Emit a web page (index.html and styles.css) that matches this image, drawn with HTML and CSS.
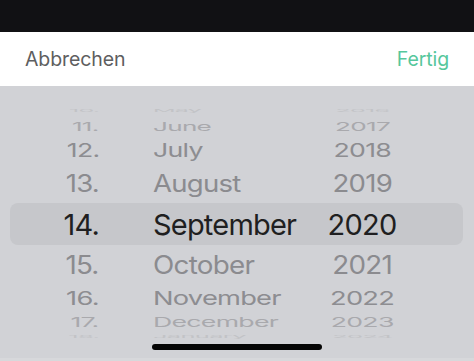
FILE: index.html
```html
<!DOCTYPE html>
<html lang="de">
<head>
<meta charset="utf-8">
<title>Datum wählen</title>
<link rel="stylesheet" href="styles.css">
</head>
<body>
<div class="status"></div>
<div class="toolbar">
  <span class="btn cancel">Abbrechen</span>
  <span class="btn done">Fertig</span>
</div>
<div class="picker">
  <div class="rows">
    <div class="row r-4"><span class="day"><i>10.</i></span><span class="month"><i>May</i></span><span class="year"><i>2016</i></span></div>
    <div class="row r-3"><span class="day"><i>11.</i></span><span class="month"><i>June</i></span><span class="year"><i>2017</i></span></div>
    <div class="row r-2"><span class="day"><i>12.</i></span><span class="month"><i>July</i></span><span class="year"><i>2018</i></span></div>
    <div class="row r-1"><span class="day"><i>13.</i></span><span class="month"><i>August</i></span><span class="year"><i>2019</i></span></div>
    <div class="row r0"><span class="day"><i>14.</i></span><span class="month"><i>September</i></span><span class="year"><i>2020</i></span></div>
    <div class="row r1"><span class="day"><i>15.</i></span><span class="month"><i>October</i></span><span class="year"><i>2021</i></span></div>
    <div class="row r2"><span class="day"><i>16.</i></span><span class="month"><i>November</i></span><span class="year"><i>2022</i></span></div>
    <div class="row r3"><span class="day"><i>17.</i></span><span class="month"><i>December</i></span><span class="year"><i>2023</i></span></div>
    <div class="row r4"><span class="day"><i>18.</i></span><span class="month"><i>January</i></span><span class="year"><i>2024</i></span></div>
  </div>
  <div class="home"></div>
  <div class="safe"></div>
</div>
</body>
</html>
```

FILE: styles.css
```css
html, body {
  margin: 0;
  padding: 0;
}
body {
  width: 474px;
  height: 361px;
  overflow: hidden;
  font-family: Inter, "Noto Sans", "Liberation Sans", sans-serif;
  background: #d1d2d6;
}
.status {
  height: 32px;
  background: #111114;
}
.toolbar {
  height: 54px;
  background: #ffffff;
  display: flex;
  align-items: center;
  justify-content: space-between;
  padding: 0 25px 0 25px;
  font-size: 19.5px;
  letter-spacing: -0.1px;
}
.cancel { color: #5e5e60; }
.done { color: #56c79c; }

.picker {
  height: 275px;
  display: flex;
  flex-direction: column;
  background: #d1d2d6;
}
.rows {
  padding: 18px 11px 0 10px;
  height: 237px;
}
.row {
  display: grid;
  grid-template-columns: 143px 150px 118px;
  grid-template-rows: minmax(0, 1fr);
  align-items: center;
  font-size: 29px;
  letter-spacing: -0.8px;
  color: #8b8b8f;
  overflow: visible;
}
.row span {
  display: flex;
  align-items: center;
  height: 100%;
  min-height: 0;
}
.row i {
  font-style: normal;
  display: block;
  line-height: 1;
  white-space: nowrap;
}
.day {
  justify-content: flex-end;
  padding-right: 54px;
}
.day i { transform-origin: right center; }
.month { justify-content: flex-start; }
.month i { transform-origin: left center; }
.year { justify-content: center; }
.year i { transform-origin: center center; }

.r-4 { height: 12px; color: #c2c3c6; }
.r-4 i { transform: scale(0.86, 0.14); }
.r-3 { height: 20px; color: #a9a9ad; }
.r-3 i { transform: scale(0.9, 0.4); }
.r-2 { height: 28px; color: #8d8d91; }
.r-2 i { transform: scale(0.92, 0.66); }
.r-1 { height: 39px; color: #8b8b8f; }
.r-1 i { transform: scale(0.95, 0.82); }
.r0 {
  height: 42px;
  color: #1f1f21;
  background: #c6c7cb;
  border-radius: 8px;
}
.r1 { height: 38px; color: #8b8b8f; }
.r1 i { transform: scale(0.96, 0.86); }
.r2 { height: 30px; color: #8d8d91; }
.r2 i { transform: scale(0.94, 0.66); }
.r3 { height: 18px; color: #a9a9ad; }
.r3 i { transform: scale(0.92, 0.46); }
.r4 { height: 10px; color: #c2c3c6; }
.r4 i { transform: scale(0.88, 0.14); }

.home {
  width: 170px;
  height: 6px;
  margin: 3px auto 0 auto;
  background: #050505;
  border-radius: 3px;
}
.safe {
  margin-top: auto;
  height: 3px;
  background: #d7d8db;
}
```
